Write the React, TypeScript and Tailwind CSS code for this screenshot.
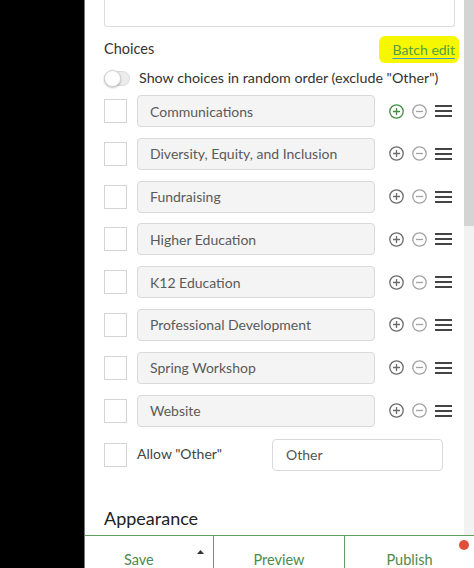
import React from "react";

const choices = [
  "Communications",
  "Diversity, Equity, and Inclusion",
  "Fundraising",
  "Higher Education",
  "K12 Education",
  "Professional Development",
  "Spring Workshop",
  "Website",
];

function PlusCircle({ color }: { color: string }) {
  return (
    <svg width="15" height="15" viewBox="0 0 15 15" fill="none" stroke={color} strokeWidth="1.3">
      <circle cx="7.5" cy="7.5" r="6.7" />
      <path d="M7.5 4v7M4 7.5h7" />
    </svg>
  );
}

function MinusCircle() {
  return (
    <svg width="15" height="15" viewBox="0 0 15 15" fill="none" stroke="#a3a3a3" strokeWidth="1.3">
      <circle cx="7.5" cy="7.5" r="6.7" />
      <path d="M4 7.5h7" />
    </svg>
  );
}

function Grip() {
  return (
    <svg width="17" height="14" viewBox="0 0 17 14" fill="none" stroke="#444" strokeWidth="2">
      <path d="M0 2h17M0 7h17M0 12h17" />
    </svg>
  );
}

function ChoiceRow({ label, first }: { label: string; first: boolean }) {
  return (
    <div className="flex items-center h-[32px]">
      <div className="w-[23px] h-[24px] border border-[#d4d4d4] bg-white" />
      <div className="ml-[10px] w-[238px] h-[32px] flex items-center pl-[12px] rounded-[4px] border border-[#d9d9d9] bg-[#f4f4f4] text-[14px] text-[#5a5a5a]">
        {label}
      </div>
      <div className="ml-[14px] flex items-center gap-[8px]">
        <PlusCircle color={first ? "#3e8e3e" : "#6b6b6b"} />
        <MinusCircle />
        <Grip />
      </div>
    </div>
  );
}

export default function App() {
  return (
    <div
      className="w-[474px] h-[568px] flex bg-black overflow-hidden"
      style={{ fontFamily: "Lato, 'Open Sans', sans-serif" }}
    >
      <div className="w-[84px] shrink-0 bg-black" />
      <div className="flex-1 flex flex-col bg-white border-l border-[#777]">
        <div className="flex flex-1 min-h-0">
          <div className="flex-1 pl-[19px] pr-[9px]">
            <div className="h-[27px] border border-t-0 border-[#dcdcdc] rounded-b-[3px]" />

            <div className="mt-[9px] h-[26px] flex items-center justify-between">
              <span className="text-[14.5px] text-[#333]">Choices</span>
              <span className="-mr-[4px] bg-[#f7f700] rounded-[6px] pl-[14px] pr-[4px] py-[3px] text-[14px] text-[#55a040] underline decoration-[#3b9ccf] underline-offset-[3px]">
                Batch edit
              </span>
            </div>

            <div className="mt-[5px] h-[22px] flex items-center">
              <div className="relative w-[26px] h-[15px] rounded-full bg-[#ececec] border border-[#dcdcdc]">
                <div className="absolute left-[-1px] top-[-2px] w-[17px] h-[17px] rounded-full bg-white border border-[#d0d0d0] shadow-[0_1px_2px_rgba(0,0,0,0.25)]" />
              </div>
              <span className="ml-[9px] text-[14.3px] text-[#333]">
                Show choices in random order (exclude "Other")
              </span>
            </div>

            <div className="mt-[6px] flex flex-col gap-[10.8px]">
              {choices.map((c, i) => (
                <ChoiceRow key={c} label={c} first={i === 0} />
              ))}
            </div>

            <div className="mt-[12px] h-[32px] flex items-center">
              <div className="w-[23px] h-[24px] border border-[#d4d4d4] bg-white" />
              <span className="ml-[10px] w-[135px] text-[14px] text-[#444] -mt-[2px]">Allow "Other"</span>
              <div className="w-[171px] h-[32px] flex items-center pl-[13px] rounded-[4px] border border-[#dadada] bg-white text-[14px] text-[#555]">
                Other
              </div>
            </div>

            <div className="mt-[34px] text-[18px] text-[#222]">Appearance</div>
          </div>
          <div className="w-[10px] bg-[#f2f2f2]">
            <div className="h-[226px] bg-[#d4d4d4]" />
          </div>
        </div>

        <div className="relative h-[33px] shrink-0 flex border-t border-[#5f9f5f] text-[14.5px] text-[#4d8a4d]">
          <div className="w-[129px] flex items-end justify-between pl-[39px] pr-[9px] border-r border-[#5f9f5f]">
            <span className="translate-y-[3px]">Save</span>
            <svg width="7" height="4" viewBox="0 0 7 4" className="mb-[14px]">
              <path d="M0 4L3.5 0L7 4Z" fill="#333" />
            </svg>
          </div>
          <div className="w-[131px] flex items-end justify-center border-r border-[#5f9f5f]">
            <span className="translate-y-[3px]">Preview</span>
          </div>
          <div className="flex-1 flex items-end justify-center">
            <span className="translate-y-[3px]">Publish</span>
          </div>
          <div className="absolute right-[5px] top-[4px] w-[10px] h-[10px] rounded-full bg-[#e0503a]" />
        </div>
      </div>
    </div>
  );
}
